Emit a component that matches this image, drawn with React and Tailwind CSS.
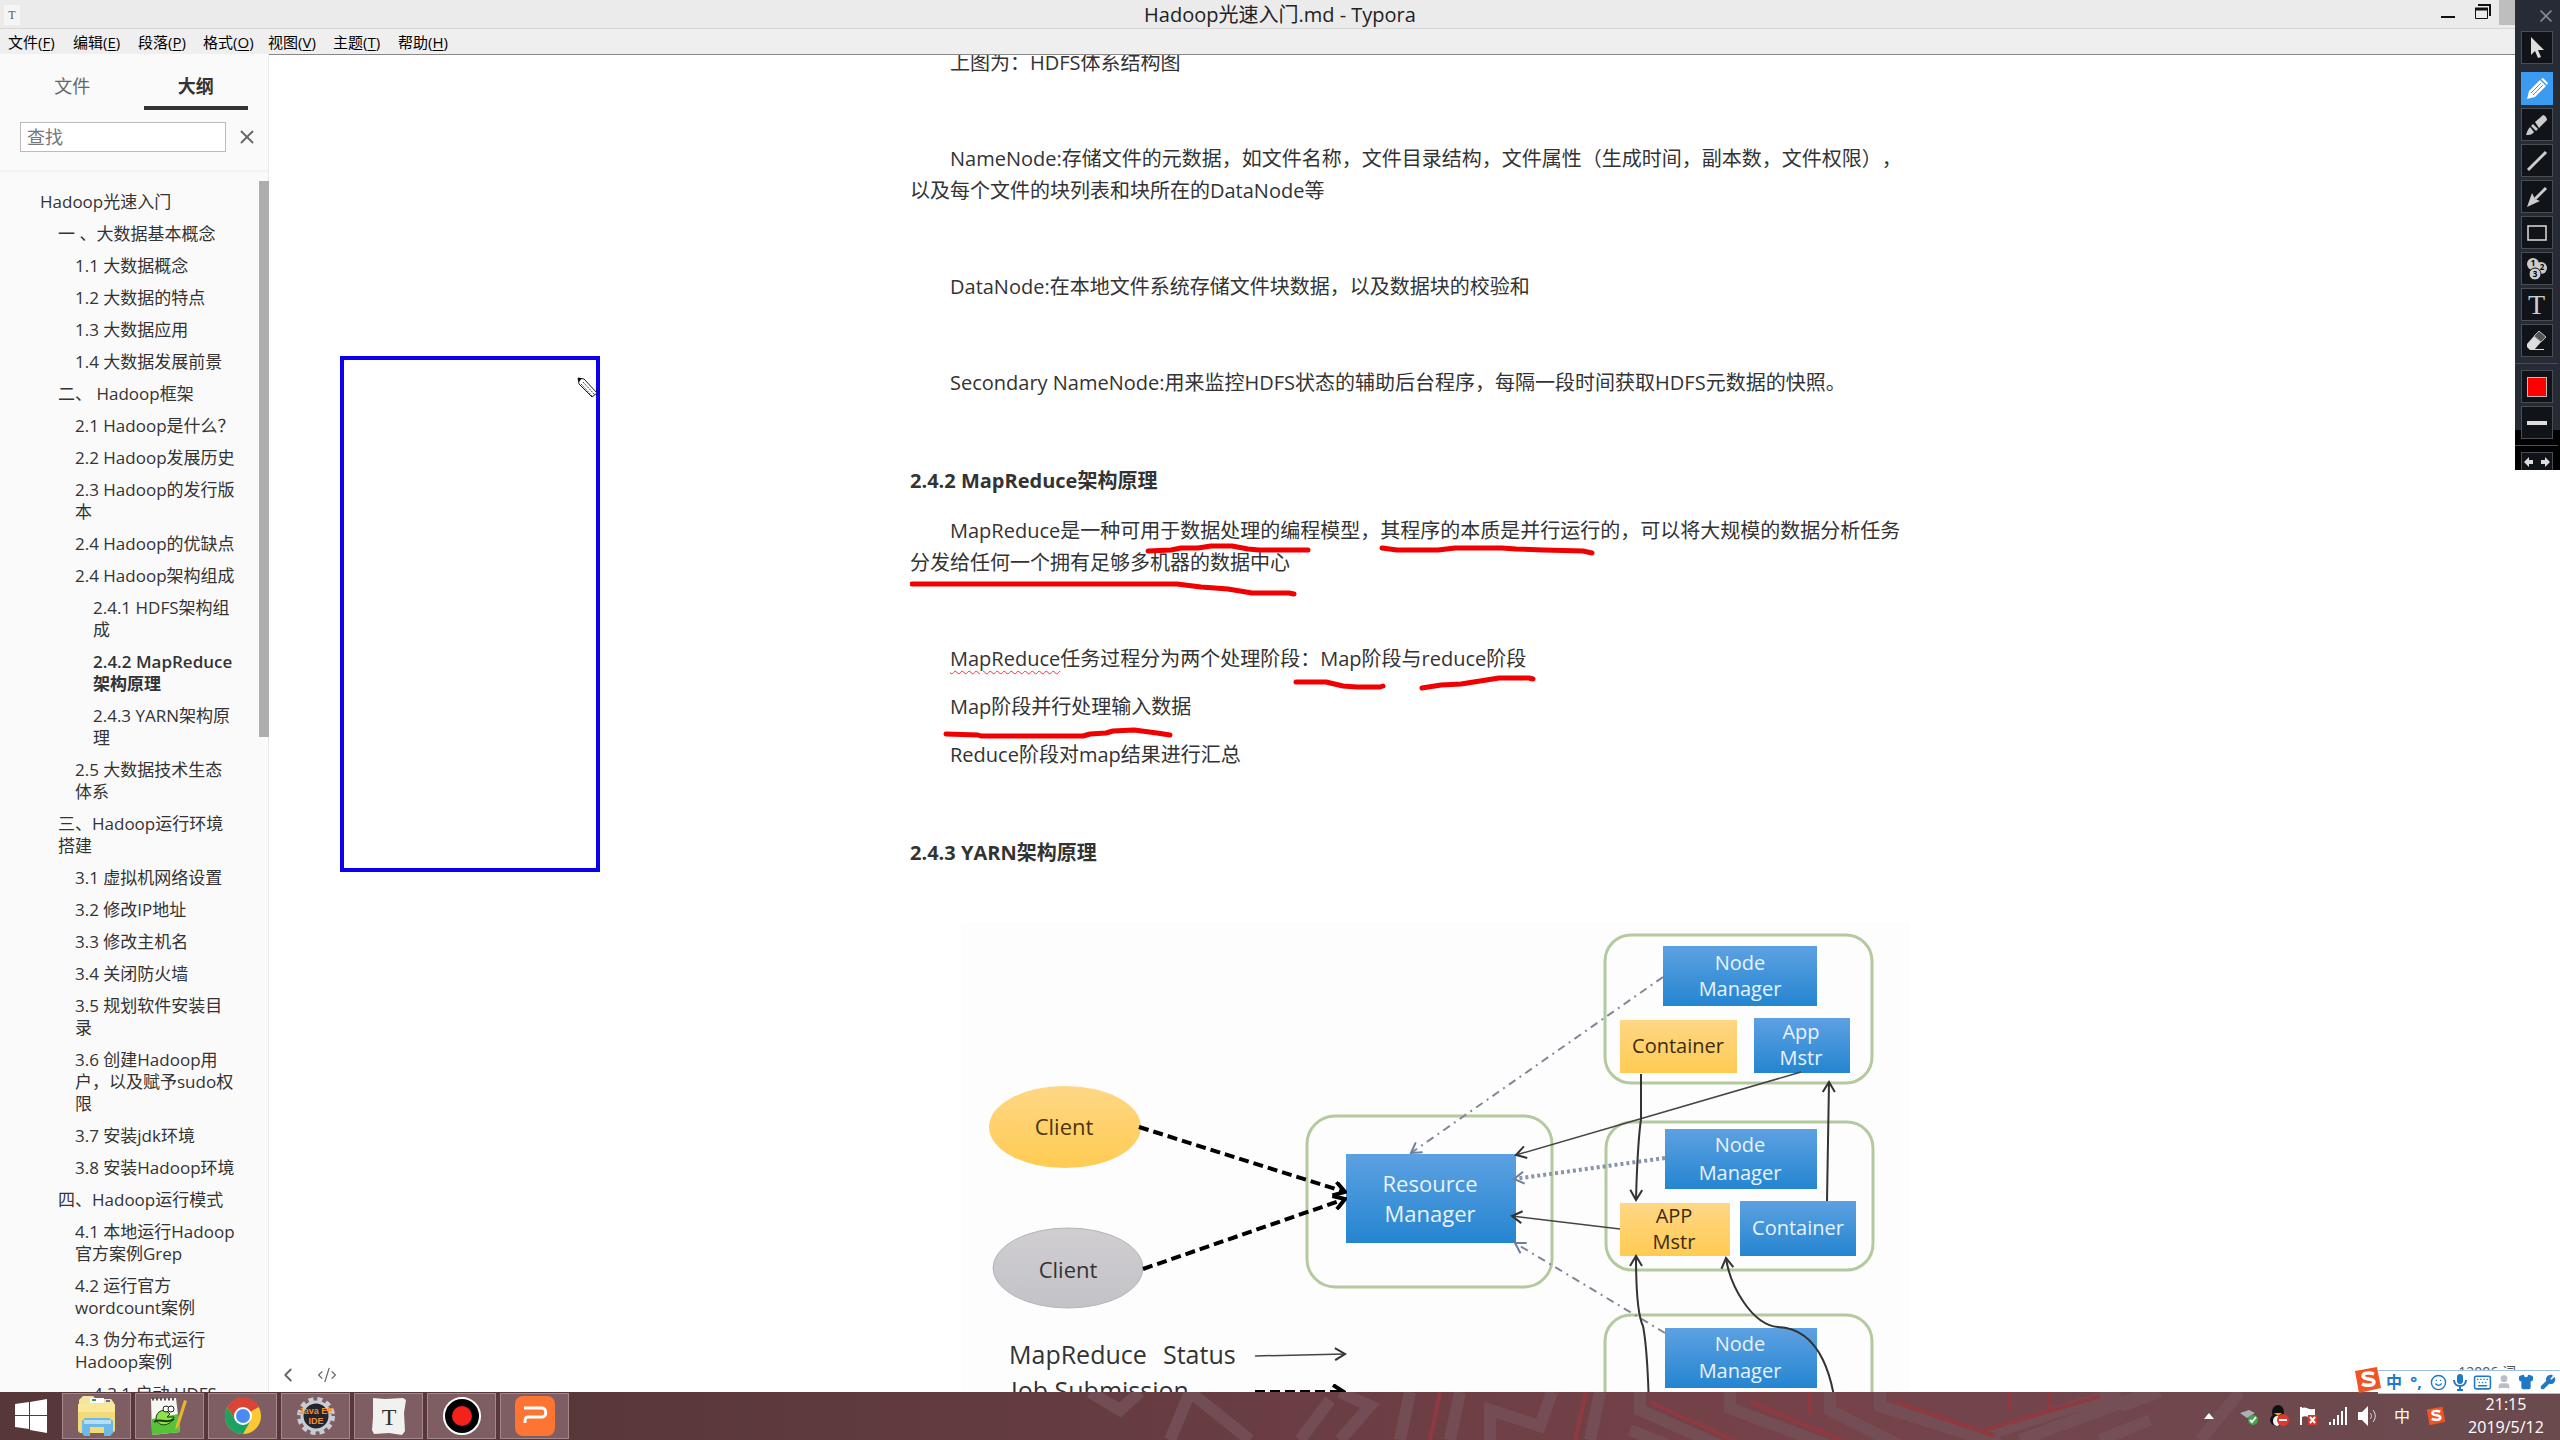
import { ChevronLeft, CodeXml, Keyboard, Mic, Shirt, Smile, User, Wrench, X } from "lucide-react";

const menus = [
  ["文件", "F"],
  ["编辑", "E"],
  ["段落", "P"],
  ["格式", "O"],
  ["视图", "V"],
  ["主题", "T"],
  ["帮助", "H"],
];

const outline = [
  [1, "Hadoop光速入门"],
  [2, "一 、大数据基本概念"],
  [3, "1.1 大数据概念"],
  [3, "1.2 大数据的特点"],
  [3, "1.3 大数据应用"],
  [3, "1.4 大数据发展前景"],
  [2, "二、 Hadoop框架"],
  [3, "2.1 Hadoop是什么？"],
  [3, "2.2 Hadoop发展历史"],
  [3, "2.3 Hadoop的发行版本"],
  [3, "2.4 Hadoop的优缺点"],
  [3, "2.4 Hadoop架构组成"],
  [4, "2.4.1 HDFS架构组成"],
  [4, "2.4.2 MapReduce架构原理", true],
  [4, "2.4.3 YARN架构原理"],
  [3, "2.5 大数据技术生态体系"],
  [2, "三、Hadoop运行环境搭建"],
  [3, "3.1 虚拟机网络设置"],
  [3, "3.2 修改IP地址"],
  [3, "3.3 修改主机名"],
  [3, "3.4 关闭防火墙"],
  [3, "3.5 规划软件安装目录"],
  [3, "3.6 创建Hadoop用户，以及赋予sudo权限"],
  [3, "3.7 安装jdk环境"],
  [3, "3.8 安装Hadoop环境"],
  [2, "四、Hadoop运行模式"],
  [3, "4.1 本地运行Hadoop官方案例Grep"],
  [3, "4.2 运行官方wordcount案例"],
  [3, "4.3 伪分布式运行Hadoop案例"],
  [4, "4.3.1 启动 HDFS"],
];

const indent = {
  1: "pl-10",
  2: "pl-[58px]",
  3: "pl-[75px]",
  4: "pl-[93px]",
};

const TitleBar = () => (
  <header className="grid h-7 shrink-0 grid-cols-[1fr_auto_1fr] bg-[#ebebeb]">
    <div className="flex items-center pl-1">
      <span className="flex h-5 w-4 items-center justify-center bg-[#f5f5f5] font-['Liberation_Serif',serif] text-xs text-[#555]">
        T
      </span>
    </div>
    <h1 className="text-xl leading-[30px] text-[#222]">Hadoop光速入门.md - Typora</h1>
    <div className="flex justify-end pr-[45px]">
      <button type="button" aria-label="最小化" className="h-7 w-9">
        <svg width="36" height="28">
          <path d="M8 17h14" stroke="#111" strokeWidth="2" />
        </svg>
      </button>
      <button type="button" aria-label="还原" className="h-7 w-[30px]">
        <svg width="30" height="28" fill="none" stroke="#111">
          <path d="M9 5h12v11" strokeWidth="2" />
          <path d="M6.5 8v10.500h12V8" />
          <path d="M6 9h13" strokeWidth="3" />
        </svg>
      </button>
      <button type="button" aria-label="关闭" className="h-[25px] w-4 bg-[#bebebe]" />
    </div>
  </header>
);

const MenuBar = () => (
  <nav className="flex h-[26px] shrink-0 items-center border-t border-[#d6d6d6] bg-[#efefef] pl-2 text-[15px] text-black">
    {menus.map(([label, key]) => (
      <button key={key} type="button" className="w-[65px] text-left leading-6">
        {label}(<u className="underline-offset-2">{key}</u>)
      </button>
    ))}
  </nav>
);

const Sidebar = () => (
  <aside className="relative flex w-[269px] shrink-0 flex-col border-r border-[#e8e8e8] bg-[#fafafa] text-[#333]">
    <div className="flex gap-[19px] px-5 text-lg" role="tablist">
      <button type="button" role="tab" className="h-14 w-[105px] border-b-4 border-transparent pt-3 text-[#666]">
        文件
      </button>
      <button type="button" role="tab" aria-selected="true" className="h-14 w-[105px] border-b-4 border-[#333] pt-3 font-bold">
        大纲
      </button>
    </div>
    <div className="mt-3 flex items-center gap-2.5 pl-5">
      <input
        aria-label="查找"
        placeholder="查找"
        className="h-[30px] w-[206px] border border-[#bbb] bg-white px-1.5 text-lg placeholder:text-[#777]"
      />
      <button type="button" aria-label="清除" className="text-[#666]">
        <X size={22} strokeWidth={2} />
      </button>
    </div>
    <div className="mt-[18px] border-t-2 border-[#f2f2f2]" />
    <nav className="min-h-0 flex-1 overflow-hidden pt-3.5">
      <ul className="text-[17px] leading-[22px]">
        {outline.map(([level, text, active]) => (
          <li key={text} className={`py-[5px] pr-[29px] ${indent[level]} ${active ? "font-semibold" : ""}`}>
            <a href="#top" className="block">
              {text}
            </a>
          </li>
        ))}
      </ul>
    </nav>
    <div className="absolute top-[127px] -right-px h-[556px] w-2.5 bg-[#adadad]" />
  </aside>
);

const Box = ({ x, y, w, h, cx, lines, gold, size = 20 }) => (
  <g>
    <rect x={x} y={y} width={w} height={h} fill={gold ? "url(#gold)" : "url(#blue)"} />
    {lines.map(([text, baseline]) => (
      <text
        key={text}
        x={cx}
        y={baseline}
        fontSize={size}
        fontWeight="500"
        textAnchor="middle"
        fill={gold ? "#3c2c10" : "#e8f3ff"}
      >
        {text}
      </text>
    ))}
  </g>
);

const YarnDiagram = () => (
  <svg viewBox="961 921 949 520" className="block w-full" role="img" aria-label="YARN架构">
    <defs>
      <linearGradient id="blue" x1="0" y1="0" x2="0" y2="1">
        <stop offset="0" stopColor="#5da1e2" />
        <stop offset="1" stopColor="#2485d0" />
      </linearGradient>
      <linearGradient id="gold" x1="0" y1="0" x2="0" y2="1">
        <stop offset="0" stopColor="#fed786" />
        <stop offset="1" stopColor="#ffcb52" />
      </linearGradient>
      <linearGradient id="grey" x1="0" y1="0" x2="0" y2="1">
        <stop offset="0" stopColor="#d0ced1" />
        <stop offset="1" stopColor="#c3c2c7" />
      </linearGradient>
      <marker id="open" viewBox="0 0 14 14" refX="12" refY="7" markerWidth="14" markerHeight="14" markerUnits="userSpaceOnUse" orient="auto">
        <path d="M2 1l10 6-10 6" fill="none" stroke="#333" strokeWidth="2" />
      </marker>
      <marker id="pale" viewBox="0 0 14 14" refX="12" refY="7" markerWidth="14" markerHeight="14" markerUnits="userSpaceOnUse" orient="auto">
        <path d="M2 1l10 6-10 6" fill="none" stroke="#6c7f9c" strokeWidth="2" />
      </marker>
      <marker id="heavy" viewBox="0 0 16 16" refX="14" refY="8" markerWidth="16" markerHeight="16" markerUnits="userSpaceOnUse" orient="auto">
        <path d="M3 1l11 7-11 7" fill="none" stroke="#000" strokeWidth="4" />
      </marker>
    </defs>
    <rect x="961" y="921" width="949" height="520" fill="#fdfdfd" />

    <g fill="none" stroke="#b3ca9e" strokeWidth="3">
      <rect x="1307" y="1115" width="245" height="171" rx="28" />
      <rect x="1605" y="934" width="267" height="148" rx="26" />
      <rect x="1606" y="1121" width="267" height="148" rx="26" />
      <rect x="1605" y="1314" width="267" height="150" rx="26" />
    </g>

    <ellipse cx="1065" cy="1126" rx="76" ry="41" fill="url(#gold)" />
    <ellipse cx="1068" cy="1267" rx="75" ry="40" fill="url(#grey)" stroke="#b4b3b8" />
    <g fontSize="22" fontWeight="500" textAnchor="middle">
      <text x="1064" y="1134" fill="#4a3510">Client</text>
      <text x="1068" y="1277" fill="#333">Client</text>
    </g>

    <Box x={1346} y={1153} w={170} h={89} cx={1430} size={22} lines={[["Resource", 1191], ["Manager", 1221]]} />
    <Box x={1663} y={945} w={154} h={60} cx={1740} lines={[["Node", 969], ["Manager", 995]]} />
    <Box x={1620} y={1019} w={117} h={53} cx={1678} gold lines={[["Container", 1052]]} />
    <Box x={1754} y={1017} w={96} h={55} cx={1801} lines={[["App", 1038], ["Mstr", 1064]]} />
    <Box x={1665} y={1128} w={152} h={60} cx={1740} lines={[["Node", 1151], ["Manager", 1179]]} />
    <Box x={1620} y={1202} w={110} h={53} cx={1674} gold lines={[["APP", 1222], ["Mstr", 1248]]} />
    <Box x={1740} y={1200} w={116} h={55} cx={1798} lines={[["Container", 1234]]} />
    <Box x={1665} y={1327} w={152} h={60} cx={1740} lines={[["Node", 1350], ["Manager", 1377]]} />

    <g stroke="#000" strokeWidth="4" strokeDasharray="10 5">
      <path d="M1139 1126L1345 1191" markerEnd="url(#heavy)" />
      <path d="M1143 1268L1345 1198" markerEnd="url(#heavy)" />
      <path d="M1255 1391H1344" markerEnd="url(#heavy)" />
    </g>
    <g fill="none" stroke="#7f8798" strokeWidth="2" strokeDasharray="8 5 2 5">
      <path d="M1663 976L1411 1152" markerEnd="url(#pale)" />
      <path d="M1665 1332L1515 1242" markerEnd="url(#pale)" />
    </g>
    <path d="M1665 1157L1514 1178" stroke="#8a93ab" strokeWidth="4" strokeDasharray="3 3" markerEnd="url(#pale)" />
    <g fill="none" stroke="#444" strokeWidth="1.500">
      <path d="M1801 1071L1516 1154" markerEnd="url(#open)" />
      <path d="M1620 1228L1512 1215" markerEnd="url(#open)" />
      <path d="M1255 1355L1345 1353" markerEnd="url(#open)" />
    </g>
    <g fill="none" stroke="#333" strokeWidth="2">
      <path d="M1641 1073V1118C1638 1140 1637 1160 1636 1199" markerEnd="url(#open)" />
      <path d="M1827 1200L1829 1081" markerEnd="url(#open)" />
      <path d="M1649 1420C1649 1390 1647 1345 1643 1325C1638 1315 1636 1290 1636 1255" markerEnd="url(#open)" />
      <path d="M1837 1420C1834 1380 1822 1328 1778 1326C1752 1324 1730 1285 1726 1257" markerEnd="url(#open)" />
    </g>

    <g fontSize="25" fill="#333">
      <text x="1009" y="1363">MapReduce</text>
      <text x="1163" y="1363">Status</text>
      <text x="1011" y="1399">Job Submission</text>
    </g>
  </svg>
);

const RedMarks = () => (
  <svg
    viewBox="910 47 1000 900"
    className="pointer-events-none absolute top-0 left-0 w-full"
    fill="none"
    stroke="#f00000"
    strokeWidth="5"
    strokeLinecap="round"
    strokeLinejoin="round"
  >
    <path d="M1148 551L1171 550L1181 548L1198 548L1211 546L1232 546L1248 549L1259 550H1308" />
    <path d="M1382 548L1397 550H1438L1455 548H1502L1516 549L1543 550L1583 551L1592 553" />
    <path d="M912 584H1177L1201 587L1215 588L1228 589L1252 593H1289L1294 594" />
    <path d="M1296 682H1326L1343 686L1357 687H1380L1383 686" />
    <path d="M1422 688L1441 685L1461 684L1499 678H1529L1533 679" />
    <path d="M946 734L978 735L981 736H1083L1090 734L1106 733L1113 731L1134 730L1157 733L1170 735" />
  </svg>
);

const Article = () => (
  <article className="relative mx-auto -mt-2 w-full max-w-[1000px] text-xl leading-8 text-[#333] [text-spacing-trim:space-all]">
    <div className="flex flex-col gap-4 [&>p]:min-h-8 [&>p]:indent-10">
      <p>上图为：HDFS体系结构图</p>
      <p />
      <p>
        NameNode:存储文件的元数据，如文件名称，文件目录结构，文件属性（生成时间，副本数，文件权限），以及每个文件的块列表和块所在的DataNode等
      </p>
      <p />
      <p>DataNode:在本地文件系统存储文件块数据，以及数据块的校验和</p>
      <p />
      <p>Secondary NameNode:用来监控HDFS状态的辅助后台程序，每隔一段时间获取HDFS元数据的快照。</p>
      <p />
      <h2 className="leading-9 font-bold">2.4.2 MapReduce架构原理</h2>
      <p>
        MapReduce是一种可用于数据处理的编程模型，其程序的本质是并行运行的，可以将大规模的数据分析任务分发给任何一个拥有足够多机器的数据中心
      </p>
      <p />
      <p>
        <span className="underline decoration-red-500 decoration-wavy decoration-1 underline-offset-4">MapReduce</span>
        任务过程分为两个处理阶段：Map阶段与reduce阶段
      </p>
      <p>Map阶段并行处理输入数据</p>
      <p>Reduce阶段对map结果进行汇总</p>
      <p />
      <h2 className="leading-9 font-bold">2.4.3 YARN架构原理</h2>
    </div>
    <figure className="mt-[51px] pl-[51px]">
      <YarnDiagram />
    </figure>
    <RedMarks />
  </article>
);

const ToolButton = ({ label, active, children }) => (
  <button
    type="button"
    aria-label={label}
    className={`flex h-[33px] w-8 shrink-0 items-center justify-center border ${
      active ? "border-[#3a9bf0] bg-[#3a9bf0]" : "border-[#4a4d52] bg-[#101317]"
    }`}
  >
    {children}
  </button>
);

const DrawingTools = () => (
  <div className="absolute top-0 right-0 flex w-[45px] flex-col items-center bg-linear-to-b from-[#262b36] from-[430px] to-black to-[430px] pr-0.5 [&_svg]:shrink-0">
    <button type="button" aria-label="关闭" className="flex h-[31px] w-full items-center justify-end pr-0.5 text-[#8d9096]">
      <X size={20} strokeWidth={2} />
    </button>
    <ToolButton label="选择">
      <svg width="22" height="22" viewBox="0 0 22 22" fill="#ddd">
        <path d="M5 0v18l4-4 3 7 3-1-3-7h6z" />
      </svg>
    </ToolButton>
    <div className="mt-2 flex flex-col gap-[3px]">
      <ToolButton label="铅笔" active>
        <svg width="24" height="24" viewBox="0 0 24 24" fill="#fff">
          <path d="M2 22l2-8L15 3l6 6L10 20z" />
          <path d="M16 2l2-1 5 5-1 2z" />
          <path d="M6 16L16 6M8 18L18 8" stroke="#3a9bf0" />
        </svg>
      </ToolButton>
      <ToolButton label="荧光笔">
        <svg width="24" height="24" viewBox="0 0 24 24" fill="#ccc">
          <path d="M10 9l8-7c2 0 4 3 4 5l-8 8z" />
          <path d="M8 11l5 5-2 2-5-5z" />
          <path d="M5 14l4 5c-2 3-5 3-8 3 1-3 2-6 4-8z" />
        </svg>
      </ToolButton>
      <ToolButton label="直线">
        <svg width="24" height="24" viewBox="0 0 24 24">
          <path d="M3 21L21 3" stroke="#ccc" strokeWidth="3" />
        </svg>
      </ToolButton>
      <ToolButton label="箭头">
        <svg width="24" height="24" viewBox="0 0 24 24" fill="#ccc">
          <path d="M21 3L10 14" stroke="#ccc" strokeWidth="3" />
          <path d="M2 22L7 8l3 6 5 2z" />
        </svg>
      </ToolButton>
      <ToolButton label="矩形">
        <svg width="24" height="24" viewBox="0 0 24 24">
          <rect x="3" y="5" width="18" height="14" fill="none" stroke="#ddd" strokeWidth="1.500" />
        </svg>
      </ToolButton>
      <ToolButton label="编号">
        <svg width="24" height="24" viewBox="0 0 24 24" fontSize="8" fontWeight="bold" textAnchor="middle">
          <g fill="#ccc">
            <circle cx="8" cy="7" r="6" />
            <circle cx="16" cy="11" r="6" />
            <circle cx="10" cy="17" r="6" stroke="#101317" />
          </g>
          <text x="8" y="9">1</text>
          <text x="17" y="13">2</text>
          <text x="10" y="20">3</text>
        </svg>
      </ToolButton>
      <ToolButton label="文字">
        <span className="font-['Liberation_Serif',serif] text-[28px] leading-8 text-[#ccc]">T</span>
      </ToolButton>
      <ToolButton label="橡皮">
        <svg width="24" height="24" viewBox="0 0 24 24">
          <path d="M2 15l7-8 7 6-7 8H5l-3-3z" fill="#ddd" />
          <path d="M9 7l5-5 7 6-5 5z" fill="#555" stroke="#bbb" />
          <path d="M6 20.500h13" stroke="#ddd" />
        </svg>
      </ToolButton>
    </div>
    <div className="my-1.5 w-full border-t border-[#4a4d52]" />
    <div className="flex flex-col gap-[3px]">
      <ToolButton label="颜色">
        <span className="size-5 border border-[#bbb] bg-[#f00]" />
      </ToolButton>
      <ToolButton label="线宽">
        <span className="h-1 w-5 bg-[#ddd]" />
      </ToolButton>
    </div>
    <div className="my-1.5 w-full border-t border-[#4a4d52]" />
    <button type="button" aria-label="移动" className="flex h-[18px] w-8 items-center justify-center border border-b-0 border-[#4a4d52] bg-[#101317]">
      <svg width="26" height="12" viewBox="0 0 26 12" fill="#ddd">
        <path d="M0 6l5-5v3h4v4H5v3zM26 6l-5-5v3h-4v4h4v3z" />
      </svg>
    </button>
  </div>
);

const SogouLogo = ({ size }) => (
  <svg width={size} height={size} viewBox="0 0 28 28">
    <path d="M1 5L23 1l4 21-22 5z" fill="#f05423" />
    <path d="M20 8c-5-2-11-1-11 2 0 4 11 2 11 6 0 4-8 4-12 2" fill="none" stroke="#fff" strokeWidth="3.500" />
  </svg>
);

const SogouBar = () => (
  <div className="absolute right-0 bottom-[46px] flex h-7 items-end">
    <div className="relative z-10 -mr-1">
      <SogouLogo size={28} />
    </div>
    <div className="flex h-6 w-[182px] items-center gap-0.5 border-y border-[#9cc3e6] bg-white pl-1.5 text-[#2079c7] [&>button]:flex [&>button]:w-5 [&>button]:shrink-0 [&>button]:justify-center">
      <button type="button" className="text-base leading-5 font-bold">中</button>
      <button type="button" className="text-base leading-5 font-bold">°,</button>
      <button type="button" aria-label="表情"><Smile size={17} /></button>
      <button type="button" aria-label="语音">
        <svg width="14" height="18" viewBox="0 0 14 18">
          <rect x="4" y="1" width="6" height="10" rx="3" fill="#2079c7" />
          <path d="M1 7c0 8 12 8 12 0M7 13v4M4 17h6" fill="none" stroke="#2079c7" strokeWidth="2" />
        </svg>
      </button>
      <button type="button" aria-label="键盘"><Keyboard size={19} /></button>
      <button type="button" aria-label="账户"><User size={16} color="#b8bccb" fill="#b8bccb" /></button>
      <button type="button" aria-label="皮肤"><Shirt size={16} fill="#2079c7" /></button>
      <button type="button" aria-label="设置"><Wrench size={16} fill="#2079c7" /></button>
    </div>
  </div>
);

const apps = [
  {
    name: "文件资源管理器",
    icon: (
      <svg width="42" height="42" viewBox="0 0 42 42">
        <path d="M3 5l4-4h10l3 3h15l3 4v8H3z" fill="#f5e3a4" />
        <path d="M14 3h14v5H14z" fill="#fff" />
        <path d="M16 4h4v2h-4z" fill="#3d9a50" />
        <path d="M30 5h4v2h-4z" fill="#4a78c0" />
        <path d="M2 9h37v27l-3 2H4l-2-2z" fill="#f3d978" />
        <path d="M2 9h37v8H2z" fill="#f9e79a" />
        <path d="M6 26l3-3h24l4 3v12l-3 3h-6v-9H14v9H8l-2-3z" fill="#6cb8e6" />
        <path d="M8 25h27v4H8z" fill="#b4e0f7" />
      </svg>
    ),
  },
  {
    name: "Notepad++",
    icon: (
      <svg width="42" height="42" viewBox="0 0 42 42">
        <path d="M2 4l25-1 4 34-28 3z" fill="#f7f7f2" />
        <path d="M3 24l26-5 2 18-28 3z" fill="#57c13a" />
        <path d="M3 4h24" stroke="#555" strokeWidth="3" strokeDasharray="2 2" />
        <path d="M7 24c0-9 9-11 14-5l-3 3h7c-3 9-15 11-18 2z" fill="#8fe04f" stroke="#173a10" />
        <circle cx="17" cy="14" r="3" fill="#fff" stroke="#222" />
        <circle cx="22" cy="14" r="3" fill="#fff" stroke="#222" />
        <path d="M5 27c5-5 12 3 20-3" fill="none" stroke="#173a10" strokeWidth="2" />
        <path d="M27 30L35 5l3 1-8 25-4 4z" fill="#e7b52e" />
      </svg>
    ),
  },
  {
    name: "Chrome",
    icon: (
      <svg width="40" height="40" viewBox="0 0 40 40">
        <circle cx="20" cy="20" r="18" fill="#fcc934" />
        <path d="M20 20L4.400 11A18 18 0 0 1 35.600 11z" fill="#db4437" />
        <path d="M20 11h15.600A18 18 0 0 0 4.400 11L12 24z" fill="#db4437" />
        <path d="M4.400 11A18 18 0 0 0 20 38l8-14-8 4-8-4z" fill="#1ba261" />
        <circle cx="20" cy="20" r="9" fill="#fff" />
        <circle cx="20" cy="20" r="7" fill="#4a8af4" />
      </svg>
    ),
  },
  {
    name: "Eclipse",
    icon: (
      <svg width="42" height="42" viewBox="0 0 42 42" fontFamily="Liberation Sans, sans-serif" fontSize="9" fontWeight="bold" textAnchor="middle">
        <circle cx="21" cy="21" r="17" fill="none" stroke="#c9ccd0" strokeWidth="4" strokeDasharray="5 4" />
        <circle cx="21" cy="21" r="14" fill="#22242e" stroke="#c9ccd0" strokeWidth="3" />
        <text x="21" y="19" fill="#f0902a">Java EE</text>
        <text x="21" y="29" fill="#f0902a">IDE</text>
      </svg>
    ),
  },
  {
    name: "Typora",
    icon: (
      <svg width="42" height="42" viewBox="0 0 42 42">
        <path d="M5 3l12 1 18-1 3 2-2 13 1 18-3 4-13-2-15 1-2-4 1-13z" fill="#f1f1ef" />
        <text x="21" y="30" fill="#333" fontFamily="Liberation Serif, serif" fontSize="24" textAnchor="middle">T</text>
      </svg>
    ),
  },
  {
    name: "录屏",
    icon: (
      <svg width="42" height="42" viewBox="0 0 42 42">
        <circle cx="21" cy="21" r="18" fill="#000" stroke="#fff" strokeWidth="2" />
        <circle cx="21" cy="21" r="10" fill="#f5221c" />
      </svg>
    ),
  },
  {
    name: "演示",
    icon: (
      <svg width="42" height="42" viewBox="0 0 42 42">
        <rect x="1" y="1" width="40" height="40" rx="8" fill="#fd7433" />
        <path d="M10 13h18c5 0 5 9 0 9H14c-3 0-3 2-3 6" fill="none" stroke="#fff" strokeWidth="3" />
      </svg>
    ),
  },
];

const Taskbar = () => (
  <footer className="relative flex h-12 shrink-0 items-center bg-linear-to-r from-[#573739] from-20% via-[#76424a] via-70% to-[#6b4a4e] to-95%">
    <svg className="absolute inset-y-0 right-[260px] h-12 w-[1300px]" viewBox="0 0 1300 48" fill="none" strokeWidth="12">
      <g stroke="#765158" strokeOpacity="0.8">
        <path d="M90 0l30 18 20-18M170 48L190 0M190 0l60 48M300 48L330 8M340 48L370 14l-30-14M400 48L410 0M450 48L460 0M490 48V18l50 16 12-34M590 48L600 0" />
        <path d="M640 0v18l90 40M630 38l50 20M730 0v16l110 42M830 0v18l70 36M880 0v14l120 38M970 48l150-48M1020 48l120-44M1100 48l50-20M1160 0l-40 14M1200 48L1240 0" />
      </g>
      <g stroke="#8f3a40" strokeWidth="4">
        <path d="M430 48L440 0M575 48L586 0M650 10l100 46M750 10l110 46M895 10l100 34M1010 0v20M1050 0v18M810 0v22M985 38L1100 4" />
      </g>
    </svg>
    <button type="button" aria-label="开始" className="relative flex h-12 w-[62px] items-center justify-center">
      <svg width="34" height="34" viewBox="0 0 34 34" fill="#fff">
        <path d="M1 5l14-2v13H1zM16 3l17-3v16H16zM1 17h14v13L1 28zM16 17h17v17l-17-3z" />
      </svg>
    </button>
    <div className="relative flex gap-1">
      {apps.map((app) => (
        <button
          key={app.name}
          type="button"
          aria-label={app.name}
          className="flex h-[46px] w-[69px] items-center justify-center border border-[#a5888b] bg-[#7e5e62]"
        >
          {app.icon}
        </button>
      ))}
    </div>
    <div className="relative ml-auto flex items-center gap-2 pr-3.5 text-white">
      <svg width="10" height="6" viewBox="0 0 10 6" fill="#fff" className="mr-4">
        <path d="M0 6l5-6 5 6z" />
      </svg>
      <svg width="22" height="22" viewBox="0 0 22 22">
        <path d="M2 8l9-3 6 3-8 5z" fill="#aab0b6" />
        <circle cx="15" cy="15" r="5" fill="#3fa648" />
        <path d="M12 15l2 2 4-5" fill="none" stroke="#fff" strokeWidth="2" />
      </svg>
      <svg width="22" height="22" viewBox="0 0 22 22">
        <ellipse cx="10" cy="7" rx="6" ry="7" fill="#111" />
        <ellipse cx="9" cy="15" rx="7" ry="6" fill="#111" />
        <ellipse cx="9" cy="16" rx="4" ry="5" fill="#f4f4f4" />
        <path d="M6 8h8l-4 3z" fill="#f2a51f" />
        <circle cx="15" cy="15" r="6" fill="#e6352b" />
        <path d="M11 15h8" stroke="#fff" strokeWidth="2" />
      </svg>
      <svg width="22" height="22" viewBox="0 0 22 22">
        <path d="M3 2v18" stroke="#fff" strokeWidth="2" />
        <path d="M4 3c4-2 5 2 13 1v9c-7 0-9-3-13-1z" fill="#fff" />
        <path d="M10 10h9v10h-9z" fill="#d8362f" />
        <path d="M12 12l5 6M17 12l-5 6" stroke="#fff" strokeWidth="2" />
      </svg>
      <svg width="20" height="18" viewBox="0 0 20 18" fill="#fff">
        <path d="M1 15h2v3H1zM5 12h2v6H5zM9 8h2v10H9zM13 4h2v14h-2zM17 0h2v18h-2z" />
      </svg>
      <svg width="22" height="22" viewBox="0 0 22 22">
        <path d="M2 7h4l6-6v20l-6-6H2z" fill="#fff" />
        <path d="M14 8c2 2 2 4 0 6M17 5c3 4 3 8 0 12" fill="none" stroke="#ddd" />
      </svg>
      <span className="ml-2 text-base">中</span>
      <span className="ml-2">
        <SogouLogo size={20} />
      </span>
      <time className="ml-3 w-20 text-center text-base leading-[23px]">
        21:15
        <br />
        2019/5/12
      </time>
    </div>
  </footer>
);

const App = () => (
  <div className="relative flex h-screen flex-col overflow-hidden bg-white font-['Open_Sans','Noto_Sans_CJK_SC',sans-serif]">
    <TitleBar />
    <MenuBar />
    <div className="flex min-h-0 flex-1">
      <Sidebar />
      <main className="relative min-w-0 flex-1 overflow-hidden border-t border-[#888] pr-[9px]">
        <Article />
        {/* hand-drawn frame and pencil cursor */}
        <div className="absolute top-[301px] left-[71px] h-[516px] w-[260px] border-4 border-[#0a00ee]" />
        <svg width="22" height="22" viewBox="0 0 22 22" className="absolute top-[322px] left-[308px]">
          <path d="M1 1l6 1 13 14-5 4L2 7z" fill="#fff" stroke="#222" />
          <path d="M1 1h4L2 5z" fill="#000" />
          <path d="M6 5l12 13M4 7l12 13" stroke="#444" strokeDasharray="2 1" />
        </svg>
        <div className="absolute bottom-1.5 left-2 flex items-center gap-[18px] text-[#666]">
          <button type="button" aria-label="收起侧边栏">
            <ChevronLeft size={22} />
          </button>
          <button type="button" aria-label="源代码模式">
            <CodeXml size={20} strokeWidth={1.5} />
          </button>
        </div>
        <span className="absolute right-11 bottom-2.5 text-sm text-[#555]">12006 词</span>
      </main>
    </div>
    <Taskbar />
    <SogouBar />
    <DrawingTools />
  </div>
);

export default App;
